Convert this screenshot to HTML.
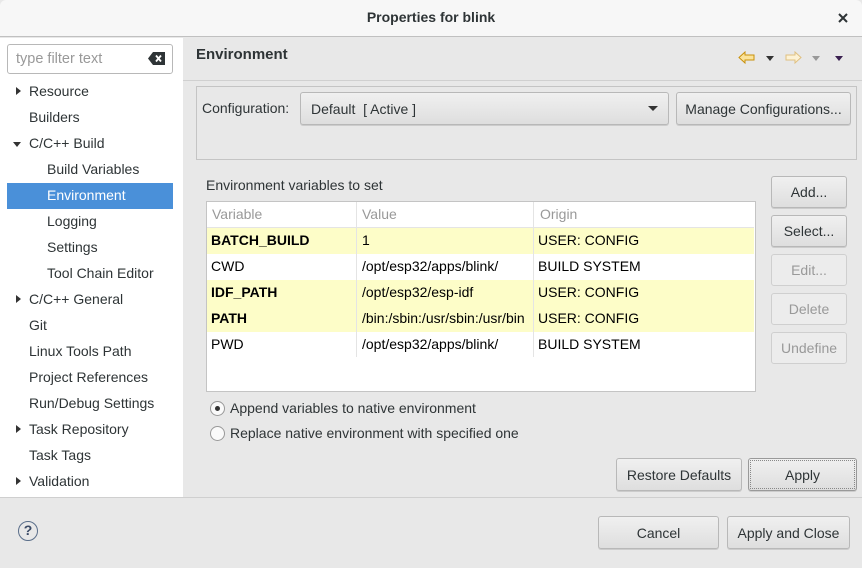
<!DOCTYPE html>
<html><head><style>
*{box-sizing:border-box;margin:0;padding:0}
body{width:862px;height:568px;overflow:hidden;background:#e8e8e8;font-family:"Liberation Sans",sans-serif;font-size:14px;color:#2e3436;position:relative}
.a{position:absolute;white-space:nowrap}
.btn{position:absolute;border:1px solid #b8b8b8;border-radius:3px;background:linear-gradient(#f0f0f0,#dedede);text-align:center;color:#2e3436;box-shadow:0 1px 0 #ccc}
.dis{background:#ececec;color:#999;border-color:#cfcfcf;box-shadow:none}
.tri{position:absolute;width:0;height:0}
.row{position:absolute;left:207px;width:547px;height:26px}
.y{background:#fdfdc8}
</style></head><body>
<div class="a" style="left:0;top:0;width:862px;height:37px;background:#f7f7f7;border-bottom:1px solid #c0c0c0;border-radius:6px 6px 0 0"></div>
<div class="a" style="left:0;top:9px;width:862px;text-align:center;font-weight:bold;font-size:14px">Properties for blink</div>
<svg class="a" style="left:838px;top:13px" width="10" height="10"><path d="M1 1L9 9M9 1L1 9" stroke="#2e3436" stroke-width="2"/></svg>

<div class="a" style="left:0;top:38px;width:183px;height:459px;background:#fff"></div>
<div class="a" style="left:7px;top:44px;width:166px;height:30px;border:1px solid #b8b8b8;border-radius:3px;background:#fff"></div>
<div class="a" style="left:16px;top:51px;color:#999;font-size:14.5px">type filter text</div>
<svg class="a" style="left:148px;top:52px" width="17" height="13"><path d="M5 0H17V13H5L0 6.5Z" fill="#2e3436"/><path d="M8 3.5L13 9.5M13 3.5L8 9.5" stroke="#fff" stroke-width="1.8"/></svg>

<div class="a" style="left:7px;top:183px;width:166px;height:26px;background:#4a90d9"></div>
<div class="tri" style="left:16px;top:87px;border-left:5px solid #333;border-top:4px solid transparent;border-bottom:4px solid transparent"></div>
<div class="tri" style="left:13px;top:142px;border-top:5px solid #333;border-left:4px solid transparent;border-right:4px solid transparent"></div>
<div class="tri" style="left:16px;top:295px;border-left:5px solid #333;border-top:4px solid transparent;border-bottom:4px solid transparent"></div>
<div class="tri" style="left:16px;top:425px;border-left:5px solid #333;border-top:4px solid transparent;border-bottom:4px solid transparent"></div>
<div class="tri" style="left:16px;top:477px;border-left:5px solid #333;border-top:4px solid transparent;border-bottom:4px solid transparent"></div>
<div class="a" style="left:29px;top:83px">Resource</div>
<div class="a" style="left:29px;top:109px">Builders</div>
<div class="a" style="left:29px;top:135px">C/C++ Build</div>
<div class="a" style="left:47px;top:161px">Build Variables</div>
<div class="a" style="left:47px;top:187px;color:#fff">Environment</div>
<div class="a" style="left:47px;top:213px">Logging</div>
<div class="a" style="left:47px;top:239px">Settings</div>
<div class="a" style="left:47px;top:265px">Tool Chain Editor</div>
<div class="a" style="left:29px;top:291px">C/C++ General</div>
<div class="a" style="left:29px;top:317px">Git</div>
<div class="a" style="left:29px;top:343px">Linux Tools Path</div>
<div class="a" style="left:29px;top:369px">Project References</div>
<div class="a" style="left:29px;top:395px">Run/Debug Settings</div>
<div class="a" style="left:29px;top:421px">Task Repository</div>
<div class="a" style="left:29px;top:447px">Task Tags</div>
<div class="a" style="left:29px;top:473px">Validation</div>

<div class="a" style="left:196px;top:46px;font-weight:bold;font-size:15px">Environment</div>
<div class="a" style="left:183px;top:80px;width:679px;height:1px;background:#d0d0d0"></div>
<svg class="a" style="left:738px;top:51px" width="110" height="14">
<path d="M1 6.5L7 1V4H16V9H7V12Z" fill="#fbe39a" stroke="#c8900a" stroke-width="1"/>
<path d="M28 5H36L32 10Z" fill="#333"/>
<path d="M63 6.5L57 1V4H48V9H57V12Z" fill="#fdf2d5" stroke="#e0c080" stroke-width="1"/>
<path d="M74 5H82L78 10Z" fill="#999"/>
<path d="M97 5H105L101 10Z" fill="#3a2050"/>
</svg>

<div class="a" style="left:196px;top:86px;width:661px;height:74px;border:1px solid #c4c4c4"></div>
<div class="a" style="left:202px;top:100px">Configuration:</div>
<div class="btn" style="left:300px;top:92px;width:369px;height:33px;text-align:left;padding:8px 10px">Default &nbsp;[ Active ]</div>
<div class="tri" style="left:648px;top:106px;border-top:5px solid #333;border-left:5px solid transparent;border-right:5px solid transparent"></div>
<div class="btn" style="left:676px;top:92px;width:175px;height:33px;padding-top:8px">Manage Configurations...</div>

<div class="a" style="left:206px;top:177px">Environment variables to set</div>
<div class="a" style="left:206px;top:201px;width:550px;height:191px;background:#fff;border:1px solid #c4c4c4"></div>
<div class="row y" style="top:228px"></div>
<div class="row y" style="top:280px"></div>
<div class="row y" style="top:306px"></div>
<div class="a" style="left:207px;top:227px;width:547px;height:1px;background:#e4e4e4"></div>
<div class="a" style="left:356px;top:202px;width:1px;height:155px;background:#e4e4e4"></div>
<div class="a" style="left:533px;top:202px;width:1px;height:155px;background:#e4e4e4"></div>
<div class="a" style="left:212px;top:206px;color:#999">Variable</div>
<div class="a" style="left:362px;top:206px;color:#999">Value</div>
<div class="a" style="left:540px;top:206px;color:#999">Origin</div>
<div class="a" style="left:211px;top:232px;font-weight:bold;color:#000">BATCH_BUILD</div>
<div class="a" style="left:362px;top:232px;color:#000">1</div>
<div class="a" style="left:538px;top:232px;color:#000">USER: CONFIG</div>
<div class="a" style="left:211px;top:258px;color:#000">CWD</div>
<div class="a" style="left:362px;top:258px;color:#000">/opt/esp32/apps/blink/</div>
<div class="a" style="left:538px;top:258px;color:#000">BUILD SYSTEM</div>
<div class="a" style="left:211px;top:284px;font-weight:bold;color:#000">IDF_PATH</div>
<div class="a" style="left:362px;top:284px;color:#000">/opt/esp32/esp-idf</div>
<div class="a" style="left:538px;top:284px;color:#000">USER: CONFIG</div>
<div class="a" style="left:211px;top:310px;font-weight:bold;color:#000">PATH</div>
<div class="a" style="left:362px;top:310px;width:170px;overflow:hidden;color:#000">/bin:/sbin:/usr/sbin:/usr/bin</div>
<div class="a" style="left:538px;top:310px;color:#000">USER: CONFIG</div>
<div class="a" style="left:211px;top:336px;color:#000">PWD</div>
<div class="a" style="left:362px;top:336px;color:#000">/opt/esp32/apps/blink/</div>
<div class="a" style="left:538px;top:336px;color:#000">BUILD SYSTEM</div>

<div class="btn" style="left:771px;top:176px;width:76px;height:32px;padding-top:7px">Add...</div>
<div class="btn" style="left:771px;top:215px;width:76px;height:32px;padding-top:7px">Select...</div>
<div class="btn dis" style="left:771px;top:254px;width:76px;height:32px;padding-top:7px">Edit...</div>
<div class="btn dis" style="left:771px;top:293px;width:76px;height:32px;padding-top:7px">Delete</div>
<div class="btn dis" style="left:771px;top:332px;width:76px;height:32px;padding-top:7px">Undefine</div>

<div class="a" style="left:210px;top:401px;width:15px;height:15px;border:1px solid #999;border-radius:50%;background:#fafafa"></div>
<div class="a" style="left:215px;top:406px;width:5px;height:5px;border-radius:50%;background:#333"></div>
<div class="a" style="left:230px;top:400px">Append variables to native environment</div>
<div class="a" style="left:210px;top:426px;width:15px;height:15px;border:1px solid #999;border-radius:50%;background:#fafafa"></div>
<div class="a" style="left:230px;top:425px">Replace native environment with specified one</div>

<div class="btn" style="left:616px;top:458px;width:126px;height:33px;padding-top:8px">Restore Defaults</div>
<div class="btn" style="left:748px;top:458px;width:109px;height:33px;padding-top:8px;border-color:#999"><div style="position:absolute;left:1px;top:1px;right:1px;bottom:1px;border:1px dotted #888"></div>Apply</div>

<div class="a" style="left:0;top:497px;width:862px;height:1px;background:#cfcfcf"></div>
<div class="a" style="left:18px;top:521px;width:20px;height:20px;border:1.5px solid #5a6e8a;border-radius:50%;text-align:center;font-size:14px;line-height:17px;color:#3a4a66;font-weight:bold">?</div>
<div class="btn" style="left:598px;top:516px;width:121px;height:33px;padding-top:8px">Cancel</div>
<div class="btn" style="left:727px;top:516px;width:123px;height:33px;padding-top:8px">Apply and Close</div>
</body></html>
